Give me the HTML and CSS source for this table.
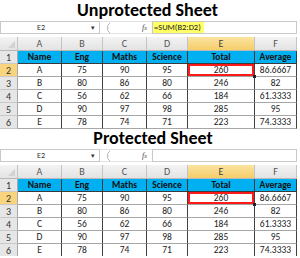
FILE: index.html
```html
<!DOCTYPE html>
<html>
<head>
<meta charset="utf-8">
<link rel="stylesheet" href="styles.css">
</head>
<body>
<div class="sheet">
  <h1 class="title t1">Unprotected Sheet</h1>
  <div class="fbar">
    <div class="namebox"><span class="nm">E2</span><span class="dd">&#9662;</span></div>
    <div class="btns">
      <svg class="arc" width="8" height="12" viewBox="0 0 8 12"><path d="M7 1 A6 6 0 0 0 7 11" fill="none" stroke="#b5b5b5" stroke-width="1"/><path d="M4 6 H6" stroke="#c8c8c8" stroke-width="1"/></svg>
      <span class="fx">f<i>x</i></span>
    </div>
    <div class="finput"><span class="formula">=SUM(B2:D2)</span></div>
  </div>
  <div class="grid">
    <div class="ch corner"></div><div class="ch">A</div><div class="ch">B</div><div class="ch">C</div><div class="ch">D</div><div class="ch sel">E</div><div class="ch">F</div>
    <div class="rn">1</div><div class="hd">Name</div><div class="hd">Eng</div><div class="hd">Maths</div><div class="hd">Science</div><div class="hd">Total</div><div class="hd">Average</div>
    <div class="rn sel">2</div><div class="c">A</div><div class="c">75</div><div class="c">90</div><div class="c">95</div><div class="c active">260</div><div class="c">86.6667</div>
    <div class="rn">3</div><div class="c">B</div><div class="c">80</div><div class="c">86</div><div class="c">80</div><div class="c">246</div><div class="c">82</div>
    <div class="rn">4</div><div class="c">C</div><div class="c">56</div><div class="c">62</div><div class="c">66</div><div class="c">184</div><div class="c">61.3333</div>
    <div class="rn">5</div><div class="c">D</div><div class="c">90</div><div class="c">97</div><div class="c">98</div><div class="c">285</div><div class="c">95</div>
    <div class="rn">6</div><div class="c">E</div><div class="c">78</div><div class="c">74</div><div class="c">71</div><div class="c">223</div><div class="c">74.3333</div>
  </div>
</div>
<div class="sheet">
  <h1 class="title t2">Protected Sheet</h1>
  <div class="fbar">
    <div class="namebox"><span class="nm">E2</span><span class="dd">&#9662;</span></div>
    <div class="btns">
      <svg class="arc" width="8" height="12" viewBox="0 0 8 12"><path d="M7 1 A6 6 0 0 0 7 11" fill="none" stroke="#b5b5b5" stroke-width="1"/><path d="M4 6 H6" stroke="#c8c8c8" stroke-width="1"/></svg>
      <span class="fx">f<i>x</i></span>
    </div>
    <div class="finput"></div>
  </div>
  <div class="grid">
    <div class="ch corner"></div><div class="ch">A</div><div class="ch">B</div><div class="ch">C</div><div class="ch">D</div><div class="ch sel">E</div><div class="ch">F</div>
    <div class="rn">1</div><div class="hd">Name</div><div class="hd">Eng</div><div class="hd">Maths</div><div class="hd">Science</div><div class="hd">Total</div><div class="hd">Average</div>
    <div class="rn sel">2</div><div class="c">A</div><div class="c">75</div><div class="c">90</div><div class="c">95</div><div class="c active">260</div><div class="c">86.6667</div>
    <div class="rn">3</div><div class="c">B</div><div class="c">80</div><div class="c">86</div><div class="c">80</div><div class="c">246</div><div class="c">82</div>
    <div class="rn">4</div><div class="c">C</div><div class="c">56</div><div class="c">62</div><div class="c">66</div><div class="c">184</div><div class="c">61.3333</div>
    <div class="rn">5</div><div class="c">D</div><div class="c">90</div><div class="c">97</div><div class="c">98</div><div class="c">285</div><div class="c">95</div>
    <div class="rn">6</div><div class="c">E</div><div class="c">78</div><div class="c">74</div><div class="c">71</div><div class="c">223</div><div class="c">74.3333</div>
  </div>
</div>
</body>
</html>
```
FILE: styles.css
```css
* { box-sizing: border-box; }
html, body { margin: 0; padding: 0; background: #fff; }
body { width: 300px; font-family: Carlito, Lato, "Open Sans", sans-serif; color: #111; }
.sheet { height: 128px; display: flex; flex-direction: column; }
.title {
  margin: 0; height: 20px; font-size: 18px; font-weight: 700; line-height: 20px;
  text-align: center; color: #000; white-space: nowrap;
}
.t1 { padding-right: 5px; }
.t2 { padding-left: 6px; }
.fbar { height: 13px; display: flex; margin-top: 1px; }
.namebox {
  width: 100px; border: 1px solid #c9c9c9; background: #fff; display: flex; align-items: center;
  font-size: 8px; color: #333;
}
.nm { flex: 1; text-align: center; padding-right: 10px; line-height: 11px; }
.dd { width: 8px; font-size: 7px; color: #333; line-height: 11px; }
.btns { width: 52px; display: flex; align-items: center; background: #fff; border-top: 1px solid #e2e2e2; border-bottom: 1px solid #e2e2e2; }
.arc { margin-left: 3px; }
.fx { margin-left: auto; margin-right: 5px; font-family: "Liberation Serif", serif; font-style: italic; font-size: 8px; color: #444; }
.fx i { font-size: 6px; }
.finput { flex: 1; border: 1px solid #c9c9c9; margin-right: 3px; display: flex; align-items: stretch; }
.formula { background: #ffff66; font-size: 8.5px; line-height: 11px; padding: 0 2px 0 1px; width: 51px; color: #222; }
.grid {
  margin-top: 3px; display: grid;
  grid-template-columns: 18px 44px 41px 44px 41px 67px 42px;
  grid-template-rows: 14px repeat(6, 13px);
  width: 297px;
}
.grid > div { display: flex; align-items: center; justify-content: center; white-space: nowrap; }
.ch {
  background: linear-gradient(#f3f3f3, #e3e3e3); border-right: 1px solid #c4c4c4; border-bottom: 1px solid #b8b8b8;
  font-size: 10px; color: #555;
}
.ch.sel { background: linear-gradient(#fbe3a0, #f6cd6a); color: #444; }
.corner { position: relative; }
.corner::after {
  content: ""; position: absolute; right: 2px; bottom: 2px; width: 0; height: 0;
  border-left: 7px solid transparent; border-bottom: 7px solid #d2d2d2;
}
.rn {
  background: #e6e6e6; border-right: 1px solid #a9a9a9; border-bottom: 1px solid #c8c8c8;
  font-size: 10px; color: #333;
}
.rn.sel { background: #f8d57c; }
.hd {
  background: #00b0f0; border-right: 1px solid #3a3a3a; border-bottom: 1px solid #3a3a3a;
  font-size: 9.5px; font-weight: 700; color: #111;
}
.c {
  background: #fff; border-right: 1px solid #404040; border-bottom: 1px solid #a6a6a6;
  font-size: 9.5px; color: #222;
}
.c.active { box-shadow: inset 0 0 0 2px #ff1a1a; position: relative; }
.c.active::after {
  content: ""; position: absolute; right: -2px; bottom: -2px; width: 3px; height: 3px; background: #222;
}
```
